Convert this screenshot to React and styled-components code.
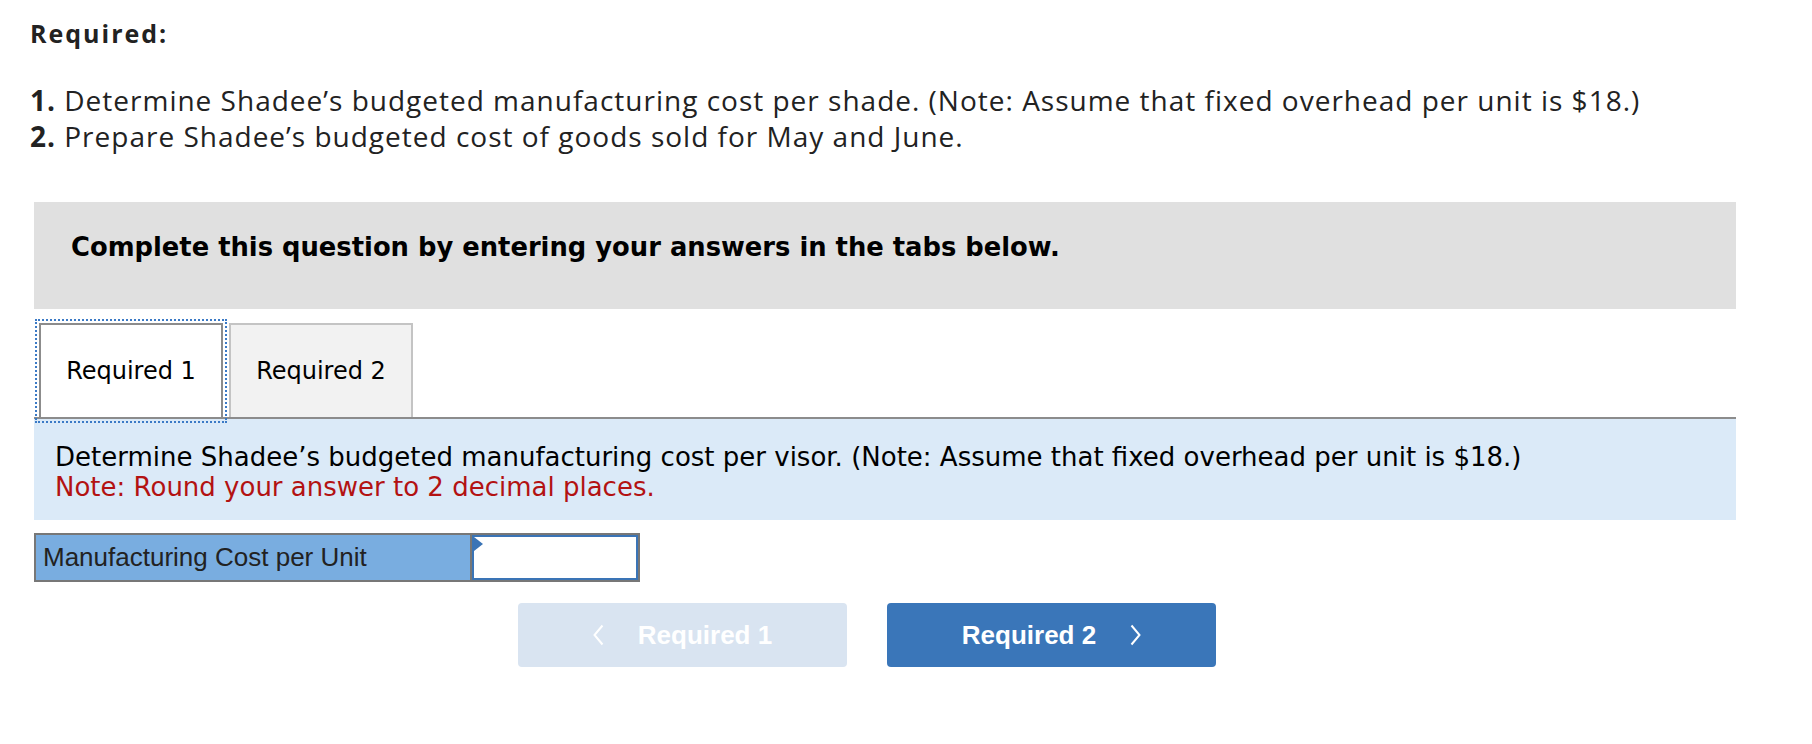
import React from 'react';
import styled, { createGlobalStyle, css } from 'styled-components';

const GlobalStyle = createGlobalStyle`
  body {
    margin: 0;
    background: #fff;
  }
`;

const Page = styled.div`
  padding: 19px 76px 40px 30px;
  color: #222;
`;

const Heading = styled.h2`
  margin: 0;
  font-family: "Open Sans", Lato, sans-serif;
  font-weight: 700;
  font-size: 25px;
  letter-spacing: 2px;
  line-height: 28px;
  color: #222;
`;

const TaskList = styled.ol`
  list-style: none;
  margin: 35px 0 0;
  padding: 0;
  font-family: "Open Sans", Lato, sans-serif;
  font-size: 28px;
  letter-spacing: 1px;
  line-height: 36px;
  color: #222;

  b {
    font-weight: 700;
  }
`;

const Workspace = styled.section`
  margin: 48px 0 0 4px;
  width: 1702px;
  font-family: "DejaVu Sans", Verdana, sans-serif;
`;

const Banner = styled.div`
  background: #e0e0e0;
  height: 107px;
  box-sizing: border-box;
  padding: 30px 0 0 37px;
  font-weight: 700;
  font-size: 25.8px;
  line-height: 30px;
  color: #000;
`;

const TabList = styled.div`
  display: flex;
  align-items: flex-end;
  gap: 6px;
  margin-top: 14px;
  padding-left: 5px;
  border-bottom: 2px solid #8c8c8c;
`;

const Tab = styled.button`
  box-sizing: border-box;
  width: 184px;
  height: 94px;
  padding: 0;
  font-family: inherit;
  font-size: 24px;
  color: #000;
  background: #f2f2f2;
  border: 2px solid #c4c4c4;
  border-bottom: none;
  cursor: pointer;

  ${p =>
    p.$active &&
    css`
      height: 96px;
      margin-bottom: -2px;
      background: #fff;
      border: 2px solid #8c8c8c;
      outline: 2px dotted #3b7ac6;
      outline-offset: 2px;
    `}
`;

const Prompt = styled.div`
  background: #dbeaf8;
  padding: 23px 20px 18px 21px;
  font-size: 26px;
  line-height: 30px;
  color: #000;
`;

const RedNote = styled.div`
  color: #b31212;
`;

const AnswerRow = styled.div`
  display: flex;
  width: 606px;
  height: 49px;
  box-sizing: border-box;
  margin-top: 13px;
  border: 2px solid #777;
`;

const RowLabel = styled.div`
  flex: 0 0 436px;
  display: flex;
  align-items: center;
  padding-left: 7px;
  box-sizing: border-box;
  background: #79ade0;
  border-right: 2px solid #777;
  font-family: "Liberation Sans", Arial, sans-serif;
  font-size: 26px;
  color: #222;
`;

const AnswerCell = styled.div`
  position: relative;
  flex: 1;
  background: #fff;
  border: 2px solid #3a74b6;

  &::before {
    content: '';
    position: absolute;
    left: 0;
    top: 0;
    border-left: 9px solid #3a74b6;
    border-top: 7px solid transparent;
    border-bottom: 7px solid transparent;
  }
`;

const AnswerInput = styled.input`
  width: 100%;
  height: 100%;
  box-sizing: border-box;
  border: none;
  outline: none;
  background: transparent;
  font: 24px "Liberation Sans", Arial, sans-serif;
  text-align: right;
  padding: 0 6px;
`;

const NavRow = styled.div`
  display: flex;
  gap: 40px;
  margin-top: 21px;
  padding-left: 484px;
`;

const NavButton = styled.button`
  width: 329px;
  height: 64px;
  display: flex;
  align-items: center;
  justify-content: center;
  gap: 34px;
  border: none;
  border-radius: 4px;
  font-family: "Liberation Sans", Arial, sans-serif;
  font-weight: 700;
  font-size: 26px;
  color: #fff;
  background: ${p => (p.disabled ? '#d9e4f1' : '#3a76b9')};
  cursor: ${p => (p.disabled ? 'default' : 'pointer')};
`;

const Chevron = ({ dir }) => (
  <svg width="11" height="22" viewBox="0 0 11 22" fill="none">
    <polyline
      points={dir === 'left' ? '9.5,1.5 1.5,11 9.5,20.5' : '1.5,1.5 9.5,11 1.5,20.5'}
      stroke="#fff"
      strokeWidth="2"
    />
  </svg>
);

export default function App() {
  return (
    <>
      <GlobalStyle />
      <Page>
        <Heading>Required:</Heading>
        <TaskList>
          <li>
            <b>1.</b> Determine Shadee’s budgeted manufacturing cost per shade. (Note: Assume that fixed overhead per unit is $18.)
          </li>
          <li>
            <b>2.</b> Prepare Shadee’s budgeted cost of goods sold for May and June.
          </li>
        </TaskList>

        <Workspace>
          <Banner>Complete this question by entering your answers in the tabs below.</Banner>

          <TabList>
            <Tab $active>Required 1</Tab>
            <Tab>Required 2</Tab>
          </TabList>

          <Prompt>
            <div>
              Determine Shadee’s budgeted manufacturing cost per visor. (Note: Assume that fixed overhead per unit is $18.)
            </div>
            <RedNote>Note: Round your answer to 2 decimal places.</RedNote>
          </Prompt>

          <AnswerRow>
            <RowLabel>Manufacturing Cost per Unit</RowLabel>
            <AnswerCell>
              <AnswerInput type="text" aria-label="Manufacturing Cost per Unit" />
            </AnswerCell>
          </AnswerRow>

          <NavRow>
            <NavButton disabled>
              <Chevron dir="left" />
              <span>Required 1</span>
            </NavButton>
            <NavButton>
              <span>Required 2</span>
              <Chevron dir="right" />
            </NavButton>
          </NavRow>
        </Workspace>
      </Page>
    </>
  );
}
